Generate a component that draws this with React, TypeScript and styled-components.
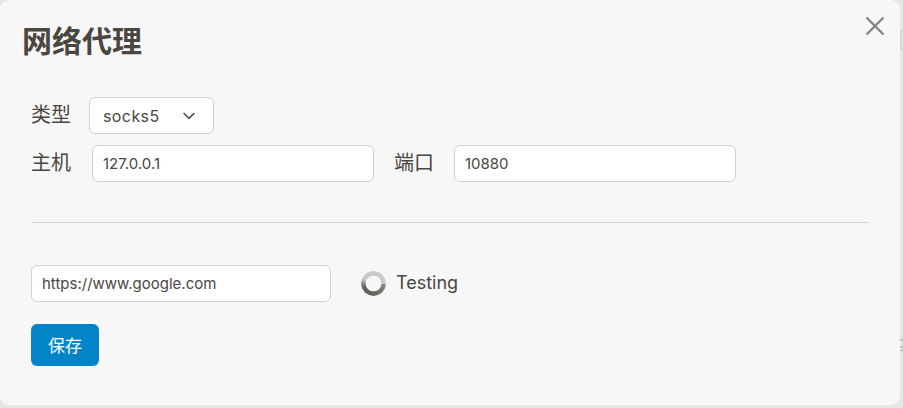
import React from "react";
import styled, { createGlobalStyle } from "styled-components";

const Global = createGlobalStyle`
  html, body { margin: 0; padding: 0; height: 100%; background: #e6e6e6; overflow: hidden; }
  body { font-family: Inter, "Noto Sans CJK SC", sans-serif; color: #4a4640; }
`;

const BackdropThumb = styled.div`
  position: absolute;
  left: 900px;
  top: 30px;
  width: 2px;
  height: 20px;
  background: #d4d4d4;
`;

const BackdropGlyph = styled.span`
  position: absolute;
  left: 896px;
  top: 332px;
  font-size: 16px;
  line-height: 20px;
  color: #b4b4b4;
`;

const Modal = styled.div`
  position: relative;
  box-sizing: border-box;
  width: 900px;
  height: 405px;
  background: #f7f7f7;
  border-radius: 9px;
  padding: 19px 31px 0;
`;

const Title = styled.h2`
  margin: 0 0 0 -9px;
  font-family: "Noto Sans CJK SC", sans-serif;
  font-size: 30px;
  line-height: 41px;
  font-weight: 700;
  color: #4a4640;
`;

const Close = styled.button`
  position: absolute;
  top: 16px;
  right: 15px;
  width: 20px;
  height: 20px;
  padding: 0;
  border: 0;
  background: none;
  display: block;
`;

const Form = styled.div`
  margin-top: 37px;
  display: flex;
  flex-direction: column;
  gap: 11px;
`;

const Row = styled.div`
  display: flex;
  align-items: center;
`;

const Label = styled.label<{ $gap: number; $lead?: number }>`
  font-family: "Noto Sans CJK SC", sans-serif;
  font-size: 20px;
  line-height: 26px;
  color: #4a4640;
  margin-left: ${(p) => p.$lead ?? 0}px;
  margin-right: ${(p) => p.$gap}px;
  padding-bottom: 3px;
`;

const SelectBox = styled.div`
  box-sizing: border-box;
  width: 125px;
  height: 37px;
  background: #fff;
  border: 1px solid #d2d2d2;
  border-radius: 6px;
  padding: 0 18px 0 13px;
  display: flex;
  align-items: center;
  justify-content: space-between;
  font-size: 16px;
  letter-spacing: 0.4px;
  color: #4a4640;
`;

const Input = styled.input<{ $w: number }>`
  box-sizing: border-box;
  width: ${(p) => p.$w}px;
  height: 37px;
  background: #fff;
  border: 1px solid #d2d2d2;
  border-radius: 6px;
  padding: 0 10px;
  font-family: Inter, sans-serif;
  font-size: 15px;
  color: #4a4640;
  outline: none;
`;

const Divider = styled.hr`
  margin: 40px 0 42px;
  border: 0;
  height: 1px;
  background: #d6d6d6;
`;

const Status = styled.div`
  display: flex;
  align-items: center;
  margin-left: 30px;
  gap: 10px;
  font-size: 18px;
  line-height: 22px;
  color: #4a4640;
`;

const StatusText = styled.span`
  padding-bottom: 2px;
`;

const Spinner = styled.div`
  box-sizing: border-box;
  width: 25px;
  height: 25px;
  border-radius: 50%;
  background: conic-gradient(from 95deg, #8a8883 0deg, #64625e 90deg, #6a6864 160deg, #c9c9c9 200deg, #c9c9c9 360deg);
  -webkit-mask: radial-gradient(circle, transparent 7.5px, #000 8.2px);
  mask: radial-gradient(circle, transparent 7.5px, #000 8.2px);
`;

const SaveButton = styled.button`
  display: block;
  margin-top: 22px;
  width: 68px;
  height: 42px;
  padding: 0 0 1px;
  border: 0;
  border-radius: 6px;
  background: #0484c8;
  color: #fff;
  font-family: "Noto Sans CJK SC", sans-serif;
  font-size: 17px;
`;

export default function App() {
  return (
    <>
      <Global />
      <BackdropThumb />
      <BackdropGlyph>g</BackdropGlyph>
      <Modal>
        <Title>网络代理</Title>
        <Close aria-label="close">
          <svg width="20" height="20" viewBox="0 0 20 20" fill="none" stroke="#858585" strokeWidth="2.4">
            <path d="M1.5 1.5 L18.5 18.5 M18.5 1.5 L1.5 18.5" />
          </svg>
        </Close>
        <Form>
          <Row>
            <Label $gap={18}>类型</Label>
            <SelectBox>
              socks5
              <svg width="12" height="8" viewBox="0 0 12 8" fill="none" stroke="#55524d" strokeWidth="1.7">
                <path d="M0.6 1 L6 6.4 L11.4 1" />
              </svg>
            </SelectBox>
          </Row>
          <Row>
            <Label $gap={21}>主机</Label>
            <Input $w={282} defaultValue="127.0.0.1" />
            <Label $gap={20} $lead={20}>端口</Label>
            <Input $w={282} defaultValue="10880" />
          </Row>
        </Form>
        <Divider />
        <Row>
          <Input $w={300} defaultValue="https://www.google.com" />
          <Status>
            <Spinner />
            <StatusText>Testing</StatusText>
          </Status>
        </Row>
        <SaveButton>保存</SaveButton>
      </Modal>
    </>
  );
}
